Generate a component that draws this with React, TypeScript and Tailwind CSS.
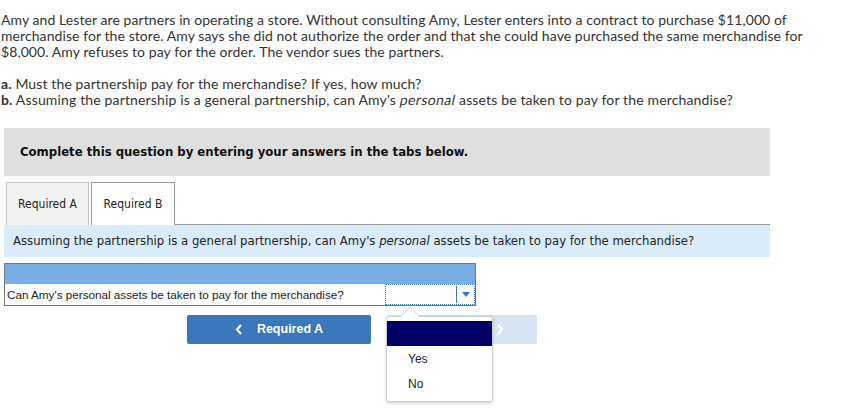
import React from 'react';

const tahoma = { fontFamily: '"DejaVu Sans Condensed", "DejaVu Sans", Tahoma, sans-serif' };
const arial = { fontFamily: '"Liberation Sans", Arial, sans-serif' };

function Tabs() {
  return (
    <div className="ml-1 mt-[6px] flex w-[766px] items-end pl-[2px]" style={tahoma}>
      <div className="flex h-[43px] w-[83px] items-center justify-center border border-b-0 border-[#c6c6c6] bg-[#f2f2f2] text-[12px] text-[#222]">
        Required A
      </div>
      <div className="ml-[2px] flex h-[43px] w-[84px] items-center justify-center border border-b-0 border-[#999] bg-white text-[12px] text-[#222]">
        Required B
      </div>
      <div className="h-px flex-1 bg-[#999]" />
    </div>
  );
}

function AnswerTable() {
  return (
    <div className="ml-1 mt-[6px] w-[472px] border border-[#777]" style={arial}>
      <div className="h-[20px] bg-[#7aade4]" />
      <div className="flex h-[21px] items-center bg-white">
        <div className="flex-1 pl-[2px] text-[11.7px] text-[#222]">
          Can Amy's personal assets be taken to pay for the merchandise?
        </div>
        <div className="flex h-full w-[90px] items-center border border-dotted border-[#3a77bb]">
          <div className="flex-1" />
          <div className="flex h-[17px] w-[18px] items-center justify-center border-l border-[#3a77bb]">
            <svg width="8" height="5" viewBox="0 0 8 5">
              <path d="M0 0 L8 0 L4 5 Z" fill="#3a77bb" />
            </svg>
          </div>
        </div>
      </div>
    </div>
  );
}

function Popup() {
  return (
    <div className="absolute left-[386px] top-[316px] w-[107px]">
      {/* caret */}
      <svg className="absolute -top-[9px] left-[14px]" width="20" height="10" viewBox="0 0 20 10">
        <path d="M0 10 L10 0 L20 10" fill="white" stroke="#cfcfcf" strokeWidth="1" />
      </svg>
      <div className="h-[86px] rounded-[3px] border border-[#cfcfcf] bg-white pt-[4px] shadow-[0_1px_3px_rgba(0,0,0,0.2)]" style={arial}>
        <div className="h-[25px] bg-[#000066]" />
        <div className="mt-px pl-[21px] text-[12px] leading-[25px] text-[#222]">Yes</div>
        <div className="pl-[21px] text-[12px] leading-[25px] text-[#222]">No</div>
      </div>
    </div>
  );
}

export default function App() {
  return (
    <div className="relative h-[414px] w-[856px] overflow-hidden bg-white">
      <div className="pl-px pt-[12px] text-[14px] leading-[16px] tracking-[0.08px] text-[#333]" style={{ fontFamily: 'Lato, "Open Sans", sans-serif' }}>
        <p className="whitespace-nowrap">
          Amy and Lester are partners in operating a store. Without consulting Amy, Lester enters into a contract to purchase $11,000 of
          <br />
          merchandise for the store. Amy says she did not authorize the order and that she could have purchased the same merchandise for
          <br />
          $8,000. Amy refuses to pay for the order. The vendor sues the partners.
        </p>
        <p className="mt-[16px] tracking-[0.12px]">
          <b>a.</b> Must the partnership pay for the merchandise? If yes, how much?
        </p>
        <p className="whitespace-nowrap tracking-[0.15px]">
          <b>b.</b> Assuming the partnership is a general partnership, can Amy's{' '}
          <span className="inline-block -skew-x-12 tracking-[0.4px]">personal</span> assets be taken to pay for the merchandise?
        </p>
      </div>

      <div className="ml-1 mt-[20px] flex h-[48px] w-[766px] items-center bg-[#dfdfdf] pl-[16px] text-[13px] font-bold text-[#111]" style={tahoma}>
        Complete this question by entering your answers in the tabs below.
      </div>

      <Tabs />

      <div className="ml-1 flex h-[32px] w-[766px] items-center bg-[#daecf9] pl-[9px] text-[13px] text-[#222]" style={tahoma}>
        Assuming the partnership is a general partnership, can Amy's&nbsp;<i>personal</i>&nbsp;assets be taken to pay for the merchandise?
      </div>

      <AnswerTable />

      <div className="mt-[9px] flex pl-[187px]" style={arial}>
        <button className="flex h-[29px] w-[184px] items-center justify-center gap-[14px] rounded-[2px] bg-[#3a77bb] text-[12.5px] font-bold text-white">
          <svg width="8" height="11" viewBox="0 0 8 11">
            <path d="M6 1 L2 5.5 L6 10" fill="none" stroke="white" strokeWidth="2.2" />
          </svg>
          Required A
        </button>
        <button className="ml-[16px] flex h-[29px] w-[150px] items-center justify-end rounded-[2px] bg-[#d6e4f2] pr-[33px] text-[12.5px] font-bold text-white">
          Required B
          <svg className="ml-[10px]" width="8" height="11" viewBox="0 0 8 11">
            <path d="M2 1 L6 5.5 L2 10" fill="none" stroke="white" strokeWidth="2.2" />
          </svg>
        </button>
      </div>

      <Popup />
    </div>
  );
}
